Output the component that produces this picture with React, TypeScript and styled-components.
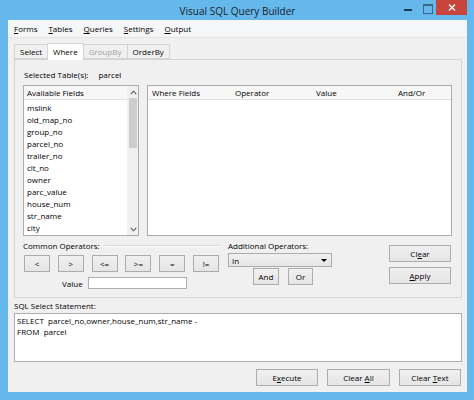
import React from 'react';
import styled, { createGlobalStyle } from 'styled-components';

const GlobalStyle = createGlobalStyle`
  html, body { margin: 0; padding: 0; background: #fff; }
  body { font-family: "Open Sans", "Noto Sans", sans-serif; font-size: 8px; font-weight: 500; color: #000; }
  * { box-sizing: border-box; }
`;

const Window = styled.div`
  width: 474px;
  height: 400px;
  background: #64b8ec;
  display: flex;
  flex-direction: column;
  padding: 0 7px 8px 8px;
`;

const TitleBar = styled.div`
  height: 20px;
  display: grid;
  grid-template-columns: 1fr auto 1fr;
  align-items: start;
`;

const Title = styled.div`
  grid-column: 2;
  font-size: 10px;
  font-weight: 400;
  line-height: 20px;
  padding-top: 1px;
  color: #1c1c1c;
  white-space: nowrap;
`;

const Controls = styled.div`
  grid-column: 3;
  justify-self: end;
  display: flex;
  align-items: flex-start;
`;

const MinBtn = styled.div`
  width: 23px;
  height: 15px;
  display: flex;
  justify-content: center;
  &::before {
    content: '';
    width: 8px;
    height: 2px;
    margin-top: 9px;
    background: #1d3954;
  }
`;

const MaxBtn = styled.div`
  width: 17px;
  height: 15px;
  display: flex;
  justify-content: center;
  &::before {
    content: '';
    width: 8px;
    height: 7px;
    margin-top: 4px;
    border: 1px solid #3d6688;
    border-top-width: 2px;
  }
`;

const CloseBtn = styled.div`
  width: 31px;
  height: 15px;
  background: #c7453c;
  display: flex;
  align-items: center;
  justify-content: center;
`;

const Client = styled.div`
  flex: 1;
  background: #f0f0f0;
  display: flex;
  flex-direction: column;
`;

const MenuBar = styled.div`
  height: 18px;
  background: #f5f6f7;
  border-bottom: 1px solid #e2e3e4;
  display: flex;
  align-items: center;
  padding-left: 0.5px;
`;

const MenuItem = styled.div`
  padding: 0 5.5px;
  line-height: 17px;
`;

const Key = styled.span`
  text-decoration: underline;
  text-underline-offset: 1px;
`;

const Content = styled.div`
  flex: 1;
  display: flex;
  flex-direction: column;
  padding: 0 5px 6px 6px;
`;

const TabStrip = styled.div`
  margin-top: 5px;
  height: 16px;
  display: flex;
  align-items: flex-end;
`;

const Tab = styled.div<{ $selected?: boolean; $disabled?: boolean }>`
  height: ${p => (p.$selected ? 17 : 15)}px;
  margin-bottom: ${p => (p.$selected ? -1 : 0)}px;
  margin-right: -1px;
  padding: 0 5px;
  line-height: ${p => (p.$selected ? 15 : 14)}px;
  border: 1px solid #d4d4d4;
  border-bottom: ${p => (p.$selected ? 'none' : '1px solid #d4d4d4')};
  background: ${p => (p.$selected ? '#ffffff' : '#f0f0f0')};
  color: ${p => (p.$disabled ? '#a0a0a0' : '#000')};
  position: relative;
  z-index: ${p => (p.$selected ? 1 : 0)};
`;

const Panel = styled.div`
  border: 1px solid #d4d4d4;
  background: #f0f0f0;
  padding: 9px 9px 8px 8px;
  display: flex;
  flex-direction: column;
`;

const TableRow = styled.div`
  height: 12px;
  line-height: 12px;
  display: flex;
  gap: 10px;
  padding-left: 1px;
`;

const ListsRow = styled.div`
  margin-top: 4px;
  height: 151px;
  display: flex;
  gap: 8px;
`;

const ListFrame = styled.div<{ $w: number; $scroll?: boolean }>`
  width: ${p => p.$w}px;
  height: 100%;
  border: 1px solid #a9abb0;
  background: #fff;
  display: grid;
  grid-template-columns: ${p => (p.$scroll ? '1fr 11px' : '1fr')};
  overflow: hidden;
`;

const ListBody = styled.div`
  display: flex;
  flex-direction: column;
  min-width: 0;
`;

const ListHeader = styled.div<{ $cols?: string; $pad?: number }>`
  height: 14px;
  line-height: 13px;
  background: #f7f7f7;
  border-bottom: 1px solid #e0e0e0;
  padding-left: ${p => p.$pad ?? 3}px;
  display: grid;
  grid-template-columns: ${p => p.$cols || '1fr'};
`;

const Items = styled.div`
  padding-top: 2px;
  display: flex;
  flex-direction: column;
`;

const Item = styled.div`
  height: 12px;
  line-height: 12px;
  padding-left: 3px;
  white-space: nowrap;
`;

const ScrollBar = styled.div`
  background: #f0f0f0;
  display: flex;
  flex-direction: column;
  border-left: 1px solid #f0f0f0;
`;

const ScrollArrow = styled.div`
  height: 12px;
  display: flex;
  align-items: center;
  justify-content: center;
`;

const Track = styled.div`
  flex: 1;
  display: flex;
  flex-direction: column;
  padding: 0 1px;
`;

const Thumb = styled.div`
  height: 50px;
  background: #cdcdcd;
`;

const OpsArea = styled.div`
  margin-top: 4px;
  display: flex;
  align-items: flex-start;
`;

const Column = styled.div<{ $w: number; $gap?: number }>`
  width: ${p => p.$w}px;
  margin-left: ${p => p.$gap ?? 0}px;
  display: flex;
  flex-direction: column;
`;

const GroupHeader = styled.div`
  height: 11px;
  line-height: 11px;
  display: flex;
  align-items: center;
  white-space: nowrap;
`;

const GroupLine = styled.div`
  flex: 1;
  margin-left: 5px;
  border-top: 1px solid #d5d5d5;
  border-bottom: 1px solid #ffffff;
`;

const OpRow = styled.div`
  margin-top: 4px;
  margin-left: 1px;
  width: 195px;
  display: flex;
  justify-content: space-between;
`;

const Button = styled.div<{ $w: number }>`
  width: ${p => p.$w}px;
  height: 17px;
  border: 1px solid #acacac;
  background: linear-gradient(#f0f0f0, #e5e5e5);
  text-align: center;
  line-height: 15px;
  white-space: pre;
`;

const ValueRow = styled.div`
  margin-top: 5px;
  padding-left: 39px;
  display: flex;
  align-items: center;
  gap: 5px;
`;

const TextField = styled.div<{ $w: number }>`
  width: ${p => p.$w}px;
  height: 12px;
  border: 1px solid #abadb3;
  background: #fff;
`;

const Combo = styled.div`
  margin-top: 2px;
  height: 14px;
  border: 1px solid #acacac;
  background: linear-gradient(#f0f0f0, #e5e5e5);
  display: flex;
  align-items: center;
  justify-content: space-between;
  padding: 0 4px 0 3px;
  &::after {
    content: '';
    border-left: 3px solid transparent;
    border-right: 3px solid transparent;
    border-top: 3px solid #000;
  }
`;

const AndOrRow = styled.div`
  margin-top: 1px;
  padding-left: 25px;
  display: flex;
  gap: 9px;
`;

const RightColumn = styled.div`
  margin-left: auto;
  margin-right: 1px;
  margin-top: 5px;
  display: flex;
  flex-direction: column;
  gap: 5px;
`;

const SqlLabel = styled.div`
  margin-top: 2px;
  height: 11px;
  line-height: 11px;
`;

const SqlBox = styled.div`
  margin-top: 2px;
  height: 49px;
  border: 1px solid #abadb3;
  background: #fff;
  padding: 1px 2px;
  line-height: 11px;
  white-space: pre;
`;

const BottomRow = styled.div`
  margin-top: 7px;
  margin-right: 1px;
  display: flex;
  justify-content: flex-end;
  gap: 9px;
`;

const fields = [
  'mslink',
  'old_map_no',
  'group_no',
  'parcel_no',
  'trailer_no',
  'clt_no',
  'owner',
  'parc_value',
  'house_num',
  'str_name',
  'city',
];

const ops = ['<', '>', '<=', '>=', '=', '!='];

const Chevron = ({ up }: { up?: boolean }) => (
  <svg width="7" height="5" viewBox="0 0 7 5">
    <path
      d={up ? 'M0.8 4 L3.5 1.2 L6.2 4' : 'M0.8 1 L3.5 3.8 L6.2 1'}
      fill="none"
      stroke="#606060"
      strokeWidth="1.1"
    />
  </svg>
);

export default function App() {
  return (
    <>
      <GlobalStyle />
      <Window>
        <TitleBar>
          <Title>Visual SQL Query Builder</Title>
          <Controls>
            <MinBtn />
            <MaxBtn />
            <CloseBtn>
              <svg width="8" height="7" viewBox="0 0 8 7">
                <path d="M1 0.5 L7 6.5 M7 0.5 L1 6.5" stroke="#fff" strokeWidth="1.4" />
              </svg>
            </CloseBtn>
          </Controls>
        </TitleBar>
        <Client>
          <MenuBar>
            <MenuItem><Key>F</Key>orms</MenuItem>
            <MenuItem><Key>T</Key>ables</MenuItem>
            <MenuItem><Key>Q</Key>ueries</MenuItem>
            <MenuItem><Key>S</Key>ettings</MenuItem>
            <MenuItem><Key>O</Key>utput</MenuItem>
          </MenuBar>
          <Content>
            <TabStrip>
              <Tab>Select</Tab>
              <Tab $selected>Where</Tab>
              <Tab $disabled>GroupBy</Tab>
              <Tab>OrderBy</Tab>
            </TabStrip>
            <Panel>
              <TableRow>
                <span>Selected Table(s):</span>
                <span>parcel</span>
              </TableRow>
              <ListsRow>
                <ListFrame $w={116} $scroll>
                  <ListBody>
                    <ListHeader>Available Fields</ListHeader>
                    <Items>
                      {fields.map(f => (
                        <Item key={f}>{f}</Item>
                      ))}
                    </Items>
                  </ListBody>
                  <ScrollBar>
                    <ScrollArrow><Chevron up /></ScrollArrow>
                    <Track><Thumb /></Track>
                    <ScrollArrow><Chevron /></ScrollArrow>
                  </ScrollBar>
                </ListFrame>
                <ListFrame $w={305}>
                  <ListBody>
                    <ListHeader $cols="83px 81px 82px 1fr" $pad={4}>
                      <span>Where Fields</span>
                      <span>Operator</span>
                      <span>Value</span>
                      <span>And/Or</span>
                    </ListHeader>
                  </ListBody>
                </ListFrame>
              </ListsRow>
              <OpsArea>
                <Column $w={197}>
                  <GroupHeader>
                    Common Operators:
                    <GroupLine />
                  </GroupHeader>
                  <OpRow>
                    {ops.map(o => (
                      <Button key={o} $w={26}>{o}</Button>
                    ))}
                  </OpRow>
                  <ValueRow>
                    <span>Value</span>
                    <TextField $w={99} />
                  </ValueRow>
                </Column>
                <Column $w={104} $gap={8}>
                  <GroupHeader>Additional Operators:</GroupHeader>
                  <Combo>In</Combo>
                  <AndOrRow>
                    <Button $w={26}>And</Button>
                    <Button $w={25}>Or</Button>
                  </AndOrRow>
                </Column>
                <RightColumn>
                  <Button $w={62}>Cl<Key>e</Key>ar</Button>
                  <Button $w={62}><Key>A</Key>pply</Button>
                </RightColumn>
              </OpsArea>
            </Panel>
            <SqlLabel>SQL Select Statement:</SqlLabel>
            <SqlBox>{'SELECT  parcel_no,owner,house_num,str_name -\nFROM  parcel'}</SqlBox>
            <BottomRow>
              <Button $w={62}>E<Key>x</Key>ecute</Button>
              <Button $w={63}>{'Clear '}<Key>A</Key>ll</Button>
              <Button $w={62}>{'Clear '}<Key>T</Key>ext</Button>
            </BottomRow>
          </Content>
        </Client>
      </Window>
    </>
  );
}
